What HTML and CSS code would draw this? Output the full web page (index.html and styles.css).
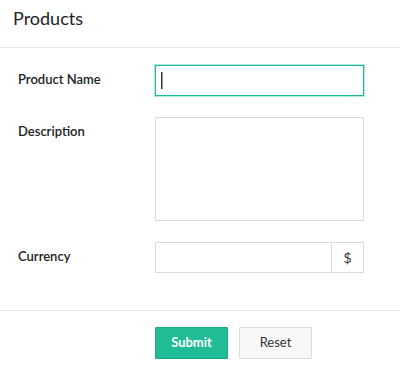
FILE: index.html
```html
<!DOCTYPE html>
<html lang="en">
<head>
  <meta charset="UTF-8">
  <title>Products</title>
  <link rel="stylesheet" href="styles.css">
</head>
<body>
  <header class="page-head">
    <h3>Products</h3>
  </header>

  <form class="product-form">
    <div class="form-row">
      <label for="productName">Product Name</label>
      <div class="field field-focus"><span class="caret"></span></div>
    </div>
    <div class="form-row">
      <label for="description">Description</label>
      <div class="field area"></div>
    </div>
    <div class="form-row">
      <label for="currency">Currency</label>
      <div class="input-group">
        <div class="field"></div>
        <span class="addon">$</span>
      </div>
    </div>
  </form>

  <div class="form-actions">
    <button type="button" class="btn btn-primary">Submit</button>
    <button type="button" class="btn">Reset</button>
  </div>
</body>
</html>
```

FILE: styles.css
```css
/* Base */
body {
  margin: 0;
  font-family: Lato, 'Open Sans', sans-serif;
  font-size: 13px;
  color: #222;
  background: #fff;
}
.page-head {
  height: 47px;
  border-bottom: 1px solid #e6e6e6;
  padding: 0 13px;
  display: flex;
  align-items: center;
}
h3 {
  margin: 0 0 11px;
  font-size: 18px;
  font-weight: 400;
  color: #222;
}
/* Form rows */
.product-form {
  padding: 17px 36px 37px 18px;
  display: flex;
  flex-direction: column;
  gap: 21px;
  border-bottom: 1px solid #e6e6e6;
}
.form-row {
  display: flex;
  align-items: flex-start;
}
.form-row label {
  width: 137px;
  font-weight: 600;
  line-height: 28px;
}
.field {
  flex: 1;
  height: 29px;
  border: 1px solid #dadada;
  background: #fff;
  display: flex;
  align-items: center;
}
.field-focus {
  border-color: #1abc9c;
  box-shadow: 0 0 0 1px rgba(26, 188, 156, 0.35);
}
.field.area {
  height: 102px;
}
.caret {
  width: 1px;
  height: 17px;
  margin-left: 5px;
  background: #333;
  box-shadow: 1px 0 0 rgba(51, 51, 51, 0.5);
}
.input-group {
  flex: 1;
  display: flex;
}
.input-group .field {
  border-right: none;
}
.addon {
  width: 31px;
  height: 29px;
  border: 1px solid #dadada;
  display: flex;
  align-items: center;
  justify-content: center;
  font-size: 14px;
  color: #333;
}
/* Buttons */
.form-actions {
  display: flex;
  gap: 11px;
  padding: 16px 0 0 155px;
}
.btn {
  width: 73px;
  height: 32px;
  font-family: inherit;
  font-size: 13px;
  font-weight: 400;
  color: #333;
  background: #f8f8f8;
  border: 1px solid #dcdcdc;
  border-radius: 1px;
  padding: 0 0 2px;
  cursor: pointer;
}
.btn-primary {
  background: #1fbc96;
  border-color: #1aa886;
  color: #fff;
  font-weight: 700;
}
```
